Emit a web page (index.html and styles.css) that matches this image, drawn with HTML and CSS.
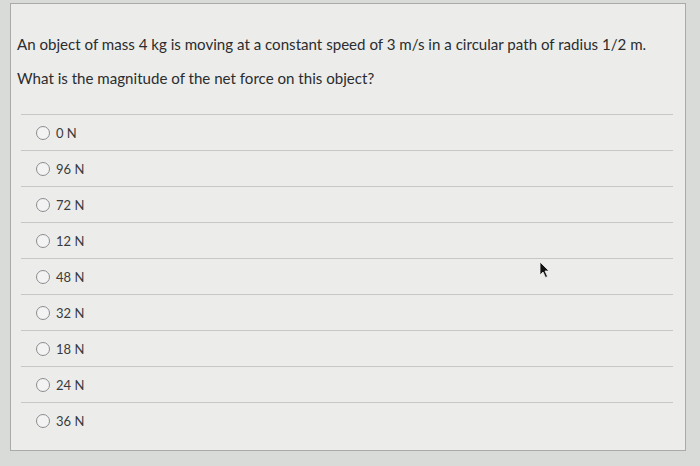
FILE: index.html
```html
<!DOCTYPE html>
<html>
<head>
<meta charset="utf-8">
<link rel="stylesheet" href="styles.css">
</head>
<body>
<div class="card">
  <p class="q">An object of mass 4 kg is moving at a constant speed of 3 m/s in a circular path of radius 1/2 m.</p>
  <p class="q q2">What is the magnitude of the net force on this object?</p>
  <ul class="opts">
    <li class="opt"><span class="radio"></span>0 N</li>
    <li class="opt"><span class="radio"></span>96 N</li>
    <li class="opt"><span class="radio"></span>72 N</li>
    <li class="opt"><span class="radio"></span>12 N</li>
    <li class="opt"><span class="radio"></span>48 N</li>
    <li class="opt"><span class="radio"></span>32 N</li>
    <li class="opt"><span class="radio"></span>18 N</li>
    <li class="opt"><span class="radio"></span>24 N</li>
    <li class="opt last"><span class="radio"></span>36 N</li>
  </ul>
  <svg class="cursor" width="12" height="18" viewBox="0 0 12 18"><path d="M1 1 L1 14 L4 11 L6.5 16.5 L8.5 15.5 L6 10 L10 10 Z" fill="#111" stroke="#eee" stroke-width="0.8"/></svg>
</div>
</body>
</html>
```
FILE: styles.css
```css
html, body { margin: 0; padding: 0; }
body {
  background: #d9dbd9;
  width: 700px;
  height: 466px;
  overflow: hidden;
  font-family: Lato, "Open Sans", sans-serif;
  color: #2b2c2e;
}
.card {
  position: relative;
  margin: 3px 0 0 10px;
  width: 676px;
  height: 448px;
  background: #ecedeb;
  border: 1px solid #a9aaa9;
  box-sizing: border-box;
  padding: 0 0 0 6px;
}
.q {
  margin: 0;
  font-size: 15.1px;
  line-height: 20px;
  padding-top: 30px;
}
.q2 { padding-top: 14px; }
.opts {
  list-style: none;
  margin: 26px 0 0 4px;
  padding: 0;
  width: 652px;
}
.opt {
  display: flex;
  align-items: center;
  height: 35px;
  border-top: 1px solid #c6c7c6;
  padding-left: 15px;
  font-size: 13px;
  color: #3a3b3d;
}
.radio {
  width: 12px;
  height: 12px;
  border: 1px solid #8c8d8e;
  border-radius: 50%;
  margin-right: 6px;
  background: #f2f3f2;
  flex: none;
}
.cursor {
  position: absolute;
  left: 528px;
  top: 257px;
}
```
